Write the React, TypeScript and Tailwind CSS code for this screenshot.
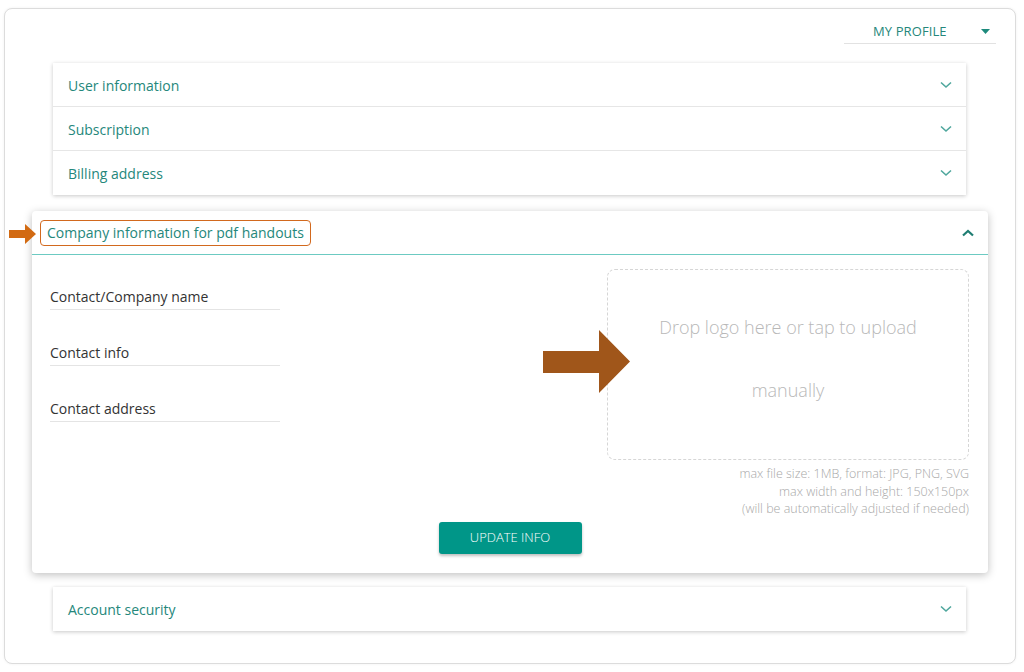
import React from "react";

const font = { fontFamily: '"Open Sans", "Noto Sans", sans-serif' };

function ChevronDown() {
  return (
    <svg width="12" height="8" viewBox="0 0 12 8" className="text-[#4fa79d]">
      <path d="M1 1.5 L6 6 L11 1.5" fill="none" stroke="currentColor" strokeWidth="1.6" />
    </svg>
  );
}

function ChevronUp() {
  return (
    <svg width="12" height="8" viewBox="0 0 12 8" className="text-[#1f7d72]">
      <path d="M1 6.5 L6 2 L11 6.5" fill="none" stroke="currentColor" strokeWidth="2.2" />
    </svg>
  );
}

function Row({ title, last }: { title: string; last?: boolean }) {
  return (
    <div
      className={
        "flex h-[44px] items-center justify-between pl-[15px] pr-[14px] " +
        (last ? "" : "border-b border-[#e6e6e6]")
      }
    >
      <span className="text-[14px] leading-[20px] pt-[2px] text-[#25877b]">{title}</span>
      <ChevronDown />
    </div>
  );
}

function Field({ label }: { label: string }) {
  return (
    <div className="w-[230px] text-[14px] text-[#333] leading-[20px] pb-[2px] border-b border-[#e4e4e4]">{label}</div>
  );
}

export default function App() {
  return (
    <div className="w-[1024px] h-[672px] bg-white overflow-hidden pt-[8px] pl-[4px]" style={font}>
      <div className="w-[1012px] h-[656px] rounded-[8px] border border-[#dcdcdc] shadow-[0_0_3px_rgba(0,0,0,0.06)] bg-white flex flex-col">
        {/* top dropdown */}
        <div className="flex justify-end pr-[19px] pt-[13px]">
          <div className="w-[152px] h-[22px] border-b border-[#e2e2e2] flex items-center justify-between pl-[29px] pr-[6px] pb-[2px]">
            <span className="text-[13px] text-[#25877b] tracking-[0.1px]">MY PROFILE</span>
            <svg width="9" height="5" viewBox="0 0 9 5">
              <path d="M0 0 L9 0 L4.5 5 Z" fill="#1d8a7c" />
            </svg>
          </div>
        </div>

        {/* accordion group */}
        <div className="mt-[19px] ml-[48px] w-[913px] bg-white shadow-[0_1px_4px_rgba(0,0,0,0.22)]">
          <Row title="User information" />
          <Row title="Subscription" />
          <Row title="Billing address" last />
        </div>

        {/* expanded panel */}
        <div className="relative mt-[16px] ml-[27px] w-[956px] bg-white rounded-[4px] shadow-[0_2px_8px_rgba(0,0,0,0.25)]">
          <div className="h-[44px] flex items-center justify-between pl-[8px] pr-[14px] border-b border-[#6ccac2]">
            <div className="h-[26px] flex items-center px-[6px] border-[1.5px] border-[#d2691e] rounded-[4px]">
              <span className="text-[14px] text-[#25877b]">Company information for pdf handouts</span>
            </div>
            <ChevronUp />
          </div>

          {/* small annotation arrow */}
          <svg
            className="absolute left-[-23px] top-[13px]"
            width="28"
            height="20"
            viewBox="0 0 28 20"
          >
            <path d="M0 6 L16 6 L16 0 L27 10 L16 20 L16 14 L0 14 Z" fill="#d26a12" />
          </svg>

          <div className="relative flex justify-between pl-[18px] pr-[19px] pt-[14px]">
            <div className="flex flex-col gap-[33px] pt-[18px]">
              <Field label="Contact/Company name" />
              <Field label="Contact info" />
              <Field label="Contact address" />
            </div>
            <div className="flex flex-col items-end">
              <div className="w-[362px] h-[191px] border border-dashed border-[#d6d6d6] rounded-[8px] flex items-center justify-center">
                <div className="text-center text-[18px] font-light text-[#b8b8b8] leading-[63px] -mt-[12px]">
                  Drop logo here or tap to upload
                  <br />
                  manually
                </div>
              </div>
              <div className="mt-[5px] text-right text-[12.5px] font-light text-[#a8a8a8] leading-[17.5px]">
                <div>max file size: 1MB, format: JPG, PNG, SVG</div>
                <div>max width and height: 150x150px</div>
                <div>(will be automatically adjusted if needed)</div>
              </div>
            </div>

            {/* big annotation arrow */}
            <svg
              className="absolute left-[511px] top-[75px]"
              width="88"
              height="63"
              viewBox="0 0 88 63"
            >
              <path d="M0 21 L56 21 L56 0 L87 31.5 L56 63 L56 43 L0 43 Z" fill="#a0561a" />
            </svg>
          </div>

          <div className="flex justify-center pt-[4px] pb-[19px]">
            <button className="w-[143px] h-[32px] rounded-[3px] bg-[#009688] text-white text-[13px] font-light shadow-[0_2px_3px_rgba(0,0,0,0.25)]">
              UPDATE INFO
            </button>
          </div>
        </div>

        {/* account security */}
        <div className="mt-[14px] ml-[48px] w-[913px] bg-white shadow-[0_1px_4px_rgba(0,0,0,0.22)]">
          <Row title="Account security" last />
        </div>
      </div>
    </div>
  );
}
